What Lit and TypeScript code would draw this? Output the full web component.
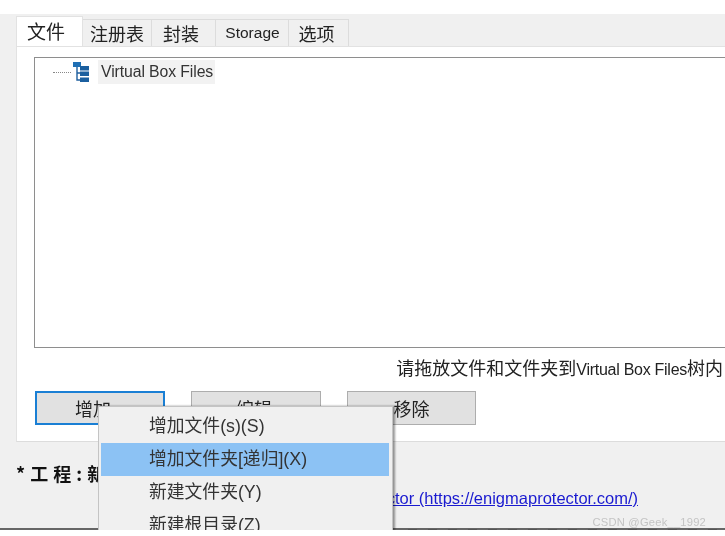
import { LitElement, html, css } from "lit";
import { customElement } from "lit/decorators.js";

@customElement("app-root")
export class AppRoot extends LitElement {
  static styles = css`
    :host { display: block; width: 725px; height: 536px; overflow: hidden; position: relative; background: #fff;
      font-family: "Liberation Sans", "Noto Sans CJK SC", sans-serif; color: #222; font-size: 17px; filter: blur(0.35px); }
    .window { margin-top: 14px; height: 514px; background: #f0f0f0; border-bottom: 2px solid #666; padding-left: 16px; overflow: hidden; }
    .tabs { display: flex; align-items: flex-end; height: 32px; }
    .tab { height: 27px; box-sizing: border-box; border: 1px solid #dcdcdc; border-bottom: none; border-left: none; display: flex; align-items: center; justify-content: center; font-size: 18px; background: #f0f0f0; padding-bottom: 1px; }
    .tab.active { height: 30px; background: #fff; width: 67px; border: 1px solid #e2e2e2; border-bottom: none; justify-content: flex-start; padding: 0 0 3px 10px; font-size: 19px; }
    .t1 { width: 69px; }
    .t2 { width: 64px; padding-right: 5px; }
    .t3 { width: 73px; font-size: 15.5px; padding-left: 1px; }
    .t4 { width: 60px; padding-right: 4px; }
    .panel { background: #fff; height: 396px; border-top: 1px solid #e2e2e2; border-left: 1px solid #e2e2e2; border-bottom: 1px solid #dcdcdc; box-sizing: border-box; padding: 10px 0 0 17px; }
    .tree { height: 291px; border: 1px solid #8e8e8e; border-right: none; box-sizing: border-box; display: flex; align-items: flex-start; padding: 2px 0 0 18px; }
    .dots { width: 18px; border-top: 1px dotted #888; margin-top: 12px; }
    .node { display: block; margin: 2px 9px 0 2px; }
    .label { background: #f2f2f2; height: 24px; line-height: 24px; padding: 0 2px 0 3px; font-size: 15.8px; letter-spacing: -0.1px; color: #333; }
    .hint { text-align: right; height: 43px; line-height: 42px; font-size: 18px; padding-right: 2px; white-space: nowrap; }
    .hint span { font-size: 16px; letter-spacing: -0.27px; }
    .buttons { display: flex; gap: 26px; padding-left: 1px; }
    .btn { width: 130px; height: 34px; box-sizing: border-box; background: #e1e1e1; border: 1px solid #adadad; display: flex; align-items: center; justify-content: center; font-size: 18px; }
    .btn.focus { border: 2px solid #1a7fd4; padding-right: 14px; }
    .btn.edit { padding-right: 4px; }
    .btn.remove { width: 129px; }
    .status { position: relative; height: 88px; }
    .proj { position: absolute; left: 0; top: 18px; font-family: "Noto Sans CJK SC", sans-serif; font-weight: 700; font-size: 18px; letter-spacing: 5px; word-spacing: -9px; color: #111; white-space: nowrap; }
    .link { position: absolute; right: 87px; top: 47px; color: #1a1ad0; text-decoration: underline; font-size: 16.5px; white-space: nowrap; }
    .menu { position: absolute; left: 98px; top: 406px; width: 295px; height: 124px; background: #f0f0f0; border: 1px solid #c4c4c4; border-bottom: none; box-sizing: border-box; box-shadow: 2px 0 2px rgba(0,0,0,.4); padding-top: 3px; overflow: hidden; clip-path: inset(-4px -4px 0 -4px); }
    .item { height: 33px; margin: 0 3px 0 2px; padding-left: 48px; line-height: 33px; font-size: 17.8px; color: #333; white-space: nowrap; }
    .item.sel { background: #8cc2f4; }
    .mark { position: absolute; right: 19px; top: 516px; font-size: 11.2px; color: #c4c4c4; letter-spacing: .2px; }
    .cut { position: absolute; left: 408px; right: 0; top: 529px; height: 1px; background: repeating-linear-gradient(90deg, #555 0 9px, transparent 9px 20px); }
  `;
  render() {
    return html`
      <div class="window">
        <div class="tabs">
          <div class="tab active">文件</div>
          <div class="tab t1">注册表</div>
          <div class="tab t2">封装</div>
          <div class="tab t3">Storage</div>
          <div class="tab t4">选项</div>
        </div>
        <div class="panel">
          <div class="tree">
            <div class="dots"></div>
            <svg class="node" width="16" height="21" viewBox="0 0 16 21">
              <path d="M4 5V18H8M4 11H8" fill="none" stroke="#1f5f9e" stroke-width="1.4"/>
              <rect x="0" y="0" width="8" height="5" fill="#1f6fb4"/>
              <rect x="7" y="4" width="9" height="4.5" fill="#1b5f9f"/>
              <rect x="7" y="9.5" width="9" height="4.5" fill="#1b5f9f"/>
              <rect x="7" y="15.5" width="9" height="4.5" fill="#1b5f9f"/>
            </svg>
            <div class="label">Virtual Box Files</div>
          </div>
          <div class="hint">请拖放文件和文件夹到<span>Virtual Box Files</span>树内</div>
          <div class="buttons">
            <div class="btn focus">增加</div>
            <div class="btn edit">编辑</div>
            <div class="btn remove">移除</div>
          </div>
        </div>
        <div class="status">
          <div class="proj">* 工程: 新</div>
          <div class="link">The Enigma Protector (https://enigmaprotector.com/)</div>
        </div>
      </div>
      <div class="cut"></div>
      <div class="menu">
        <div class="item">增加文件(s)(S)</div>
        <div class="item sel">增加文件夹[递归](X)</div>
        <div class="item">新建文件夹(Y)</div>
        <div class="item">新建根目录(Z)</div>
      </div>
      <div class="mark">CSDN @Geek__1992</div>
    `;
  }
}
